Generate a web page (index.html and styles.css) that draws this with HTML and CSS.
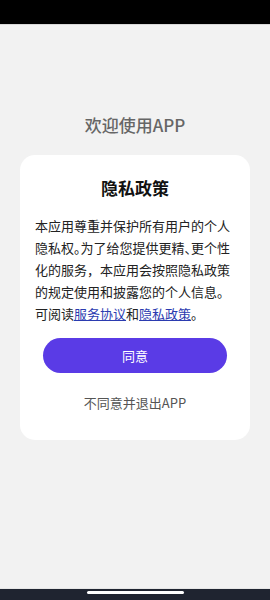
FILE: index.html
```html
<!DOCTYPE html>
<html lang="zh-CN">
<head>
    <meta charset="UTF-8">
    <meta name="viewport" content="width=device-width, initial-scale=1.0">
    <title>隐私政策</title>
    <link rel="stylesheet" href="styles.css">
</head>
<body>
    <div class="status-bar"></div>

    <div class="main">
        <h1 class="welcome">欢迎使用APP</h1>

        <!-- 隐私弹窗 -->
        <div class="card">
            <h2 class="card-title">隐私政策</h2>
            <p class="policy">
                本应用尊重并保护所有用户的个人<br>隐私权<span class="punct">。</span>为了给您提供更精<span class="punct">、</span>更个性<br>化的服务，本应用会按照隐私政策<br>的规定使用和披露您的个人信息。<br>可阅读<a href="#">服务协议</a>和<a href="#">隐私政策</a>。
            </p>
            <button class="agree">同意</button>
            <div class="exit">不同意并退出APP</div>
        </div>
    </div>

    <div class="home-bar">
        <div class="indicator"></div>
    </div>
</body>
</html>
```

FILE: styles.css
```css
html {
    height: 100%;
}
body {
    margin: 0;
    height: 100%;
    display: flex;
    flex-direction: column;
    background-color: #f2f2f2;
    font-family: "Noto Sans CJK SC", "Liberation Sans", sans-serif;
}
.status-bar {
    flex-shrink: 0;
    height: 24px;
    background-color: #000;
    border-bottom: 1px solid #d9d9d9;
}
.main {
    flex: 1;
    padding-top: 88px;
}
.welcome {
    margin: 0;
    text-align: center;
    font-size: 17px;
    line-height: 24px;
    font-weight: 500;
    color: #666;
}
.card {
    margin: 18px 20px 0;
    padding: 21px 15px 27px;
    background-color: #fff;
    border-radius: 15px;
    display: flex;
    flex-direction: column;
    align-items: center;
}
.card-title {
    margin: 0;
    font-size: 17px;
    line-height: 24px;
    font-weight: bold;
    color: #111;
}
.policy {
    align-self: stretch;
    margin: 15px 0 0;
    font-size: 13px;
    line-height: 22px;
    color: #222;
    white-space: nowrap;
}
/* 标点压缩，让第二行放得下 */
.policy .punct {
    font-feature-settings: "halt";
}
.policy a {
    color: #2b3bb0;
}
.agree {
    margin-top: 13px;
    width: 184px;
    height: 35px;
    border: none;
    border-radius: 18px;
    background-color: #5a3be6;
    color: #fff;
    font-family: inherit;
    font-size: 13px;
    cursor: pointer;
}
.exit {
    margin-top: 20px;
    font-size: 13px;
    line-height: 20px;
    color: #555;
}
.home-bar {
    flex-shrink: 0;
    height: 12px;
    padding-top: 2px;
    box-sizing: border-box;
    background-color: #1f2430;
    border-top: 1px solid #e6e6e6;
    display: flex;
    align-items: flex-start;
    justify-content: center;
}
.indicator {
    width: 97px;
    height: 3px;
    border-radius: 2px;
    background-color: #fff;
}
```
